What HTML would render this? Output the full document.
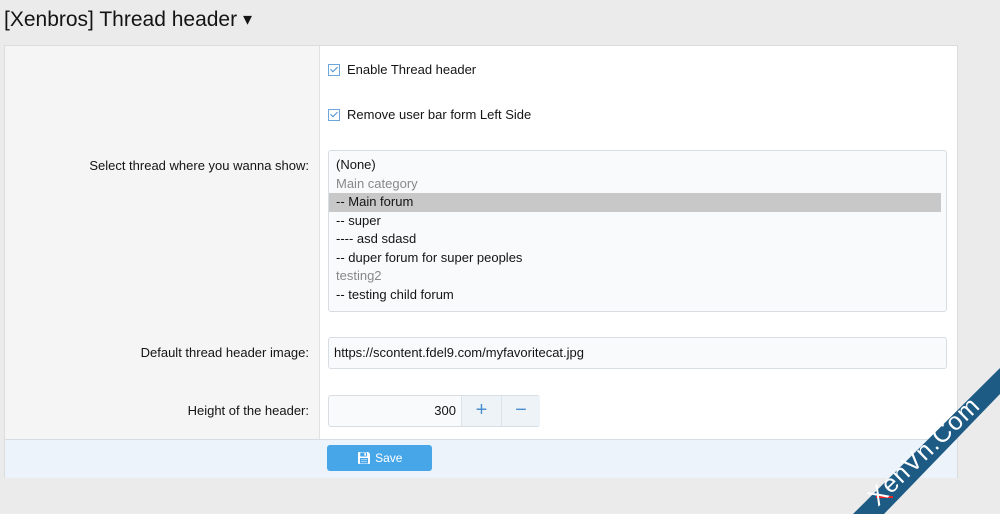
<!DOCTYPE html>
<html><head><style>
body{margin:0;width:1000px;height:514px;background:#ebebeb;font-family:"Liberation Sans",sans-serif;position:relative;overflow:hidden;color:#141414}
h1{position:absolute;left:4px;top:8px;margin:0;font-weight:normal;font-size:21px;color:#141414}
.panel{position:absolute;left:4px;top:45px;width:952px;height:431px;border:1px solid #dcdcdc;background:#fff}
.left{position:absolute;left:0;top:0;width:314px;height:393px;background:#f5f5f5;border-right:1px solid #e2e2e2}
.foot{position:absolute;left:0;top:393px;width:952px;height:38px;background:#edf3fb;border-top:1px solid #d8dde3}
.t{position:absolute;font-size:13px}
.cb{position:absolute;width:10px;height:10px;border:1px solid #6ca6db;background:#fff}
.cb:after{content:"";position:absolute;left:3px;top:0px;width:3px;height:6px;border:solid #4a8fd0;border-width:0 1.5px 1.5px 0;transform:rotate(45deg)}
.box{position:absolute;border:1px solid #d8dde2;border-radius:3px;background:#f8fafc}
.opt{height:18.5px;line-height:18.5px;padding-left:7px;font-size:13px}
.g{color:#888}
</style></head><body>
<h1>[Xenbros] Thread header <span style="font-size:18px;position:relative;top:-1px">&#9662;</span></h1>
<div class="panel">
<div class="left"></div>
<div class="cb" style="left:323px;top:18px"></div><div class="t" style="left:342px;top:16px">Enable Thread header</div>
<div class="cb" style="left:323px;top:63px"></div><div class="t" style="left:342px;top:61px">Remove user bar form Left Side</div>
<div class="t" style="left:0;width:304px;text-align:right;top:112px">Select thread where you wanna show:</div>
<div class="box" style="left:323px;top:104px;width:617px;height:155px;padding-top:5px">
<div class="opt">(None)</div><div class="opt g">Main category</div>
<div class="opt" style="background:#c8c8c8;margin-right:5px">-- Main forum</div>
<div class="opt">-- super</div><div class="opt">---- asd sdasd</div><div class="opt">-- duper forum for super peoples</div>
<div class="opt g">testing2</div><div class="opt">-- testing child forum</div></div>
<div class="t" style="left:0;width:304px;text-align:right;top:299px">Default thread header image:</div>
<div class="box" style="left:323px;top:291px;width:617px;height:30px"><div class="t" style="left:5px;top:7px">https://scontent.fdel9.com/myfavoritecat.jpg</div></div>
<div class="t" style="left:0;width:304px;text-align:right;top:357px">Height of the header:</div>
<div class="box" style="left:323px;top:349px;width:210px;height:30px">
<div class="t" style="left:0;width:127px;text-align:right;top:7px">300</div>
<div style="position:absolute;left:132px;top:0;width:39px;height:30px;border-left:1px solid #dde3ea;background:#eef3f8;color:#4a8fd0;font-size:20px;text-align:center;line-height:29px">+</div>
<div style="position:absolute;left:172px;top:0;width:38px;height:30px;border-left:1px solid #dde3ea;background:#eef3f8;color:#4a8fd0;font-size:20px;text-align:center;line-height:28px">&#8722;</div></div>
<div class="foot"><div style="position:absolute;left:322px;top:5px;width:105px;height:26px;background:#47a6e8;border-radius:3px;color:#fff;font-size:12px;line-height:26px;text-align:center">&#128190;&#xFE0E; Save</div></div>
</div>
<svg style="position:absolute;left:0;top:0" width="1000" height="514"><polygon points="853,514 884,514 1000,394 1000,368" fill="#1d5b85"/>
<line x1="876" y1="497" x2="893" y2="497" stroke="#e22" stroke-width="2"/>
<text x="0" y="0" transform="translate(878,507) rotate(-44)" fill="#fff" font-family="Liberation Sans" font-size="25" letter-spacing="1">XenVn.Com</text></svg>
</body></html>
